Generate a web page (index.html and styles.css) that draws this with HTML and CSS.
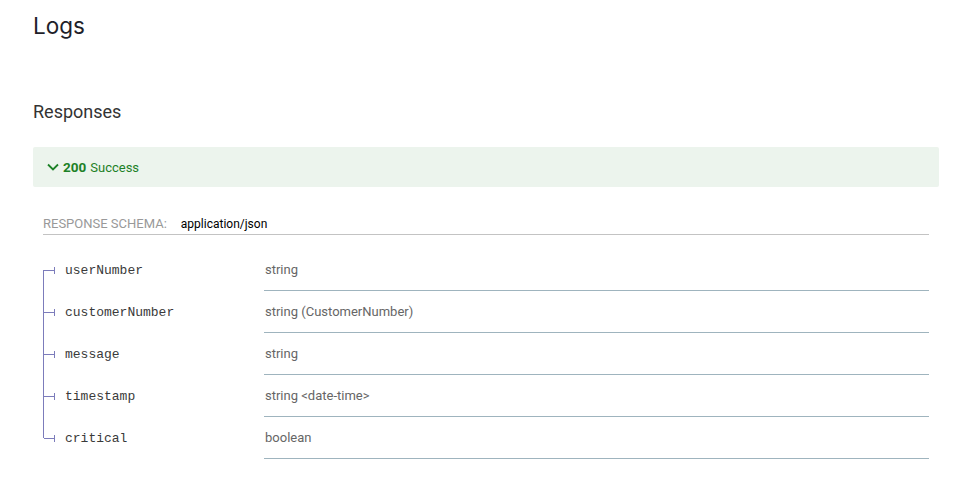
FILE: index.html
```html
<!DOCTYPE html>
<html lang="en">
<head>
<meta charset="utf-8">
<title>Logs</title>
<link rel="stylesheet" href="styles.css">
</head>
<body>
<main class="page">
  <h1 class="title">Logs</h1>
  <h3 class="responses-title">Responses</h3>
  <div class="response-ok">
    <svg class="chevron" width="12" height="8" viewBox="0 0 12 8" aria-hidden="true"><polyline points="1,1.5 6,6.5 11,1.5" fill="none" stroke="#1d8127" stroke-width="1.8"/></svg>
    <strong class="code">200</strong>
    <span class="desc">Success</span>
  </div>
  <section class="schema">
    <div class="schema-header">
      <span class="schema-label">Response schema:</span>
      <span class="schema-type">application/json</span>
    </div>
    <div class="props">
      <div class="prop first">
        <div class="prop-name"><span class="bullet"></span>userNumber</div>
        <div class="prop-type">string</div>
      </div>
      <div class="prop">
        <div class="prop-name"><span class="bullet"></span>customerNumber</div>
        <div class="prop-type">string (CustomerNumber)</div>
      </div>
      <div class="prop">
        <div class="prop-name"><span class="bullet"></span>message</div>
        <div class="prop-type">string</div>
      </div>
      <div class="prop">
        <div class="prop-name"><span class="bullet"></span>timestamp</div>
        <div class="prop-type">string &lt;date-time&gt;</div>
      </div>
      <div class="prop last">
        <div class="prop-name"><span class="bullet"></span>critical</div>
        <div class="prop-type">boolean</div>
      </div>
    </div>
  </section>
</main>
</body>
</html>
```
FILE: styles.css
```css
* { box-sizing: border-box; }
html, body { margin: 0; background: #fff; }
body {
  font-family: Roboto, "Liberation Sans", sans-serif;
  color: #333;
}
.page {
  padding: 10px 24px 20px 33px;
}
.title {
  margin: 0;
  font-family: Inter, "Noto Sans", sans-serif;
  font-weight: 400;
  font-size: 22.5px;
  line-height: 32px;
  color: #1f1f2a;
}
.responses-title {
  margin: 58px 0 0 0;
  font-weight: 400;
  font-size: 18px;
  line-height: 24px;
  color: #333;
}
.response-ok {
  margin-top: 23px;
  height: 40px;
  display: flex;
  align-items: center;
  padding-left: 14px;
  background: #ecf4ed;
  border-radius: 2px;
  color: #1d8127;
  font-size: 13px;
}
.chevron { margin-right: 4px; }
.code { font-weight: 700; font-size: 13.5px; margin-right: 4px; }
.desc { font-weight: 400; }

.schema {
  margin: 27px 10px 0 10px;
}
.schema-header {
  display: flex;
  align-items: center;
  height: 21px;
  border-bottom: 1px solid #c3c3c3;
  font-size: 12px;
  line-height: 20px;
}
.schema-label {
  text-transform: uppercase;
  font-size: 13px;
  color: #999;
  margin-right: 14px;
}
.schema-type {
  color: #000;
}
.props {
  margin-top: 14px;
}
.prop {
  display: flex;
}
.prop-name {
  width: 221px;
  flex: none;
  padding: 10px 10px 10px 0;
  font-family: "Liberation Mono", Courier, monospace;
  font-size: 13px;
  line-height: 21px;
  color: #3a3a3a;
  background: linear-gradient(#7c7cbb, #7c7cbb) no-repeat left top / 1px 100%;
  display: flex;
  align-items: center;
}
.prop.first .prop-name { background-position: left 21px; }
.prop.last .prop-name { background-size: 1px 21px; }
.bullet {
  display: flex;
  align-items: center;
  margin-left: 1px;
  margin-right: 10px;
}
.bullet::before {
  content: "";
  width: 10px;
  height: 1px;
  background: #7c7cbb;
}
.bullet::after {
  content: "";
  width: 1px;
  height: 7px;
  background: #7c7cbb;
}
.prop-type {
  flex: 1;
  padding: 10px 0 10px 1px;
  font-size: 13px;
  line-height: 21px;
  color: #666;
  border-bottom: 1px solid #9fb4be;
}
```
